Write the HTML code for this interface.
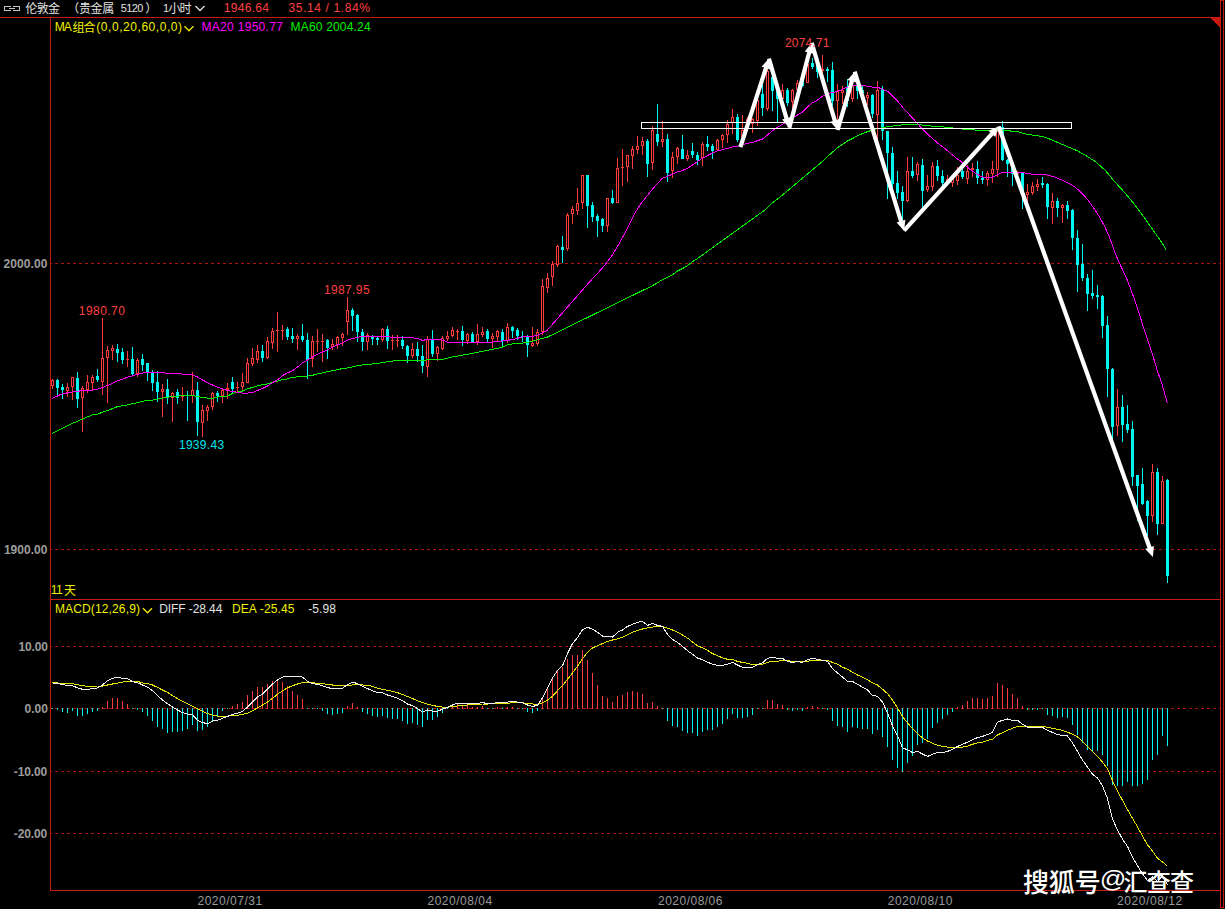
<!DOCTYPE html>
<html lang="zh-CN"><head><meta charset="utf-8"><title>伦敦金 1小时</title>
<style>html,body{margin:0;padding:0;background:#000;width:1225px;height:909px;overflow:hidden}svg{display:block}text{white-space:pre}</style></head>
<body>
<svg width="1225" height="909" viewBox="0 0 1225 909" style="position:absolute;left:0;top:0">
<rect width="1225" height="909" fill="#000"/>
<g shape-rendering="crispEdges">
<line x1="51" x2="1220" y1="263.5" y2="263.5" stroke="#a81410" stroke-width="1" stroke-dasharray="3 3" stroke-dashoffset="2"/>
<line x1="51" x2="1220" y1="549.5" y2="549.5" stroke="#a81410" stroke-width="1" stroke-dasharray="3 3" stroke-dashoffset="2"/>
<line x1="51" x2="1220" y1="646.5" y2="646.5" stroke="#a81410" stroke-width="1" stroke-dasharray="3 3" stroke-dashoffset="2"/>
<line x1="51" x2="1220" y1="708.5" y2="708.5" stroke="#a81410" stroke-width="1" stroke-dasharray="3 3" stroke-dashoffset="2"/>
<line x1="51" x2="1220" y1="771.5" y2="771.5" stroke="#a81410" stroke-width="1" stroke-dasharray="3 3" stroke-dashoffset="2"/>
<line x1="51" x2="1220" y1="833.5" y2="833.5" stroke="#a81410" stroke-width="1" stroke-dasharray="3 3" stroke-dashoffset="2"/>
<path fill="#c8190e" d="M0 17H1220V18H0zM50 18h1V891h-1zM51 599H1220v1H51zM51 890H1220v1H51zM1220 0h4V908h-4zM1221 1v906h2V1z" fill-rule="evenodd"/>
<path fill="#c8190e" d="M1210 18H1220V28z"/>
<path fill="#ff3c3c" fill-rule="evenodd" d="M52 379h1V380h-1zM51 380h3V386h-3zM52 381V385h1V381zM52 386h1V389h-1zM67 383h1V387h-1zM66 387h3V391h-3zM67 388V390h1V388zM67 391h1V397h-1zM71 377h3V387h-3zM72 378V386h1V378zM72 387h1V400h-1zM82 386h1V388h-1zM81 388h3V398h-3zM82 389V397h1V389zM82 398h1V432h-1zM87 375h1V382h-1zM86 382h3V390h-3zM87 383V389h1V383zM87 390h1V393h-1zM92 375h1V377h-1zM91 377h3V383h-3zM92 378V382h1V378zM92 383h1V390h-1zM102 318h1V358h-1zM101 358h3V382h-3zM102 359V381h1V359zM102 382h1V395h-1zM107 346h1V350h-1zM106 350h3V358h-3zM107 351V357h1V351zM107 358h1V403h-1zM112 345h1V348h-1zM111 348h3V351h-3zM112 349V350h1V349zM112 351h1V360h-1zM127 351h1V359h-1zM126 359h3V360h-3zM127 360h1V367h-1zM137 358h1V360h-1zM136 360h3V374h-3zM137 361V373h1V361zM137 374h1V377h-1zM162 384h1V389h-1zM161 389h3V392h-3zM162 390V391h1V390zM162 392h1V417h-1zM172 392h1V393h-1zM171 393h3V398h-3zM172 394V397h1V394zM172 398h1V422h-1zM182 387h1V396h-1zM181 396h3V397h-3zM182 397h1V401h-1zM192 372h1V390h-1zM191 390h3V396h-3zM192 391V395h1V391zM192 396h1V403h-1zM202 405h1V410h-1zM201 410h3V423h-3zM202 411V422h1V411zM202 423h1V437h-1zM207 405h1V407h-1zM206 407h3V411h-3zM207 408V410h1V408zM207 411h1V421h-1zM212 392h1V393h-1zM211 393h3V407h-3zM212 394V406h1V394zM212 407h1V410h-1zM222 388h1V390h-1zM221 390h3V396h-3zM222 391V395h1V391zM222 396h1V403h-1zM227 383h1V388h-1zM226 388h3V390h-3zM227 390h1V399h-1zM237 382h1V387h-1zM236 387h3V388h-3zM237 388h1V392h-1zM242 373h1V382h-1zM241 382h3V387h-3zM242 383V386h1V383zM242 387h1V391h-1zM247 358h1V363h-1zM246 363h3V383h-3zM247 364V382h1V364zM252 348h1V358h-1zM251 358h3V364h-3zM252 359V363h1V359zM252 364h1V366h-1zM257 345h1V351h-1zM256 351h3V360h-3zM257 352V359h1V352zM257 360h1V363h-1zM267 337h1V341h-1zM266 341h3V358h-3zM267 342V357h1V342zM267 358h1V359h-1zM272 328h1V331h-1zM271 331h3V343h-3zM272 332V342h1V332zM272 343h1V349h-1zM277 312h1V330h-1zM276 330h3V331h-3zM277 331h1V352h-1zM282 325h1V330h-1zM281 330h3V331h-3zM282 331h1V340h-1zM297 334h1V336h-1zM296 336h3V339h-3zM297 337V338h1V337zM297 339h1V350h-1zM312 336h1V341h-1zM311 341h3V359h-3zM312 342V358h1V342zM312 359h1V367h-1zM317 329h1V341h-1zM316 341h3V342h-3zM317 342h1V352h-1zM322 334h1V341h-1zM321 341h3V342h-3zM322 342h1V362h-1zM332 339h1V344h-1zM331 344h3V347h-3zM332 345V346h1V345zM332 347h1V350h-1zM337 336h1V337h-1zM336 337h3V345h-3zM337 338V344h1V338zM337 345h1V349h-1zM342 333h1V334h-1zM341 334h3V338h-3zM342 335V337h1V335zM342 338h1V346h-1zM347 297h1V310h-1zM346 310h3V322h-3zM347 311V321h1V311zM347 322h1V335h-1zM367 333h1V335h-1zM366 335h3V342h-3zM367 336V341h1V336zM367 342h1V350h-1zM382 328h1V329h-1zM381 329h3V340h-3zM382 330V339h1V330zM382 340h1V342h-1zM392 335h1V340h-1zM391 340h3V341h-3zM392 341h1V350h-1zM397 335h1V340h-1zM396 340h3V341h-3zM397 341h1V347h-1zM412 343h1V349h-1zM411 349h3V356h-3zM412 350V355h1V350zM412 356h1V358h-1zM427 336h1V339h-1zM426 339h3V367h-3zM427 340V366h1V340zM427 367h1V377h-1zM437 346h1V347h-1zM436 347h3V354h-3zM437 348V353h1V348zM437 354h1V361h-1zM442 336h1V338h-1zM441 338h3V349h-3zM442 339V348h1V339zM442 349h1V350h-1zM447 331h1V336h-1zM446 336h3V339h-3zM447 337V338h1V337zM447 339h1V341h-1zM452 327h1V330h-1zM451 330h3V336h-3zM452 331V335h1V331zM452 336h1V337h-1zM457 329h1V331h-1zM456 331h3V332h-3zM457 332h1V340h-1zM467 333h1V334h-1zM466 334h3V341h-3zM467 335V340h1V335zM467 341h1V344h-1zM477 324h1V334h-1zM476 334h3V342h-3zM477 335V341h1V335zM477 342h1V345h-1zM482 327h1V332h-1zM481 332h3V335h-3zM482 333V334h1V333zM482 335h1V337h-1zM492 333h1V336h-1zM491 336h3V339h-3zM492 337V338h1V337zM492 339h1V348h-1zM497 330h1V331h-1zM496 331h3V337h-3zM497 332V336h1V332zM497 337h1V341h-1zM507 323h1V327h-1zM506 327h3V341h-3zM507 328V340h1V328zM507 341h1V343h-1zM532 327h1V343h-1zM531 343h3V346h-3zM532 344V345h1V344zM532 346h1V347h-1zM537 329h1V332h-1zM536 332h3V344h-3zM537 333V343h1V333zM537 344h1V346h-1zM542 279h1V286h-1zM541 286h3V332h-3zM542 287V331h1V287zM542 332h1V335h-1zM547 273h1V278h-1zM546 278h3V288h-3zM547 279V287h1V279zM547 288h1V293h-1zM552 261h1V264h-1zM551 264h3V277h-3zM552 265V276h1V265zM552 277h1V286h-1zM557 245h1V246h-1zM556 246h3V265h-3zM557 247V264h1V247zM557 265h1V267h-1zM567 213h1V215h-1zM566 215h3V249h-3zM567 216V248h1V216zM567 249h1V251h-1zM572 206h1V209h-1zM571 209h3V214h-3zM572 210V213h1V210zM572 214h1V224h-1zM577 188h1V203h-1zM576 203h3V211h-3zM577 204V210h1V204zM577 211h1V215h-1zM581 175h3V203h-3zM582 176V202h1V176zM582 203h1V209h-1zM606 198h3V226h-3zM607 199V225h1V199zM607 226h1V232h-1zM617 158h1V168h-1zM616 168h3V203h-3zM617 169V202h1V169zM622 149h1V167h-1zM621 167h3V168h-3zM622 168h1V186h-1zM626 155h3V167h-3zM627 156V166h1V156zM627 167h1V182h-1zM632 146h1V149h-1zM631 149h3V156h-3zM632 150V155h1V150zM632 156h1V169h-1zM637 136h1V146h-1zM636 146h3V150h-3zM637 147V149h1V147zM637 150h1V154h-1zM642 137h1V141h-1zM641 141h3V146h-3zM642 142V145h1V142zM642 146h1V155h-1zM652 126h1V130h-1zM651 130h3V163h-3zM652 131V162h1V131zM652 163h1V170h-1zM662 121h1V139h-1zM661 139h3V142h-3zM662 140V141h1V140zM662 142h1V147h-1zM672 152h1V157h-1zM671 157h3V171h-3zM672 158V170h1V158zM672 171h1V178h-1zM677 147h1V148h-1zM676 148h3V157h-3zM677 149V156h1V149zM677 157h1V164h-1zM687 150h1V155h-1zM686 155h3V159h-3zM687 156V158h1V156zM687 159h1V161h-1zM702 142h1V144h-1zM701 144h3V158h-3zM702 145V157h1V145zM702 158h1V166h-1zM717 139h1V140h-1zM716 140h3V150h-3zM717 141V149h1V141zM717 150h1V151h-1zM722 134h1V135h-1zM721 135h3V140h-3zM722 136V139h1V136zM722 140h1V148h-1zM727 120h1V124h-1zM726 124h3V135h-3zM727 125V134h1V125zM727 135h1V143h-1zM732 109h1V117h-1zM731 117h3V123h-3zM732 118V122h1V118zM732 123h1V134h-1zM742 115h1V130h-1zM741 130h3V137h-3zM742 131V136h1V131zM742 137h1V140h-1zM747 117h1V119h-1zM746 119h3V129h-3zM747 120V128h1V120zM747 129h1V131h-1zM752 118h1V119h-1zM751 119h3V124h-3zM752 120V123h1V120zM752 124h1V133h-1zM757 99h1V100h-1zM756 100h3V121h-3zM757 101V120h1V101zM757 121h1V126h-1zM767 69h1V71h-1zM766 71h3V109h-3zM767 72V108h1V72zM767 109h1V111h-1zM782 84h1V90h-1zM781 90h3V99h-3zM782 91V98h1V91zM782 99h1V101h-1zM792 89h1V90h-1zM791 90h3V102h-3zM792 91V101h1V91zM792 102h1V110h-1zM797 80h1V83h-1zM796 83h3V90h-3zM797 84V89h1V84zM797 90h1V93h-1zM807 59h1V64h-1zM806 64h3V83h-3zM807 65V82h1V65zM822 55h1V69h-1zM821 69h3V71h-3zM822 71h1V73h-1zM837 84h1V91h-1zM836 91h3V101h-3zM837 92V100h1V92zM837 101h1V119h-1zM842 86h1V90h-1zM841 90h3V93h-3zM842 91V92h1V91zM842 93h1V104h-1zM852 83h1V85h-1zM851 85h3V99h-3zM852 86V98h1V86zM852 99h1V102h-1zM867 92h1V95h-1zM866 95h3V98h-3zM867 96V97h1V96zM867 98h1V105h-1zM877 81h1V90h-1zM876 90h3V115h-3zM877 91V114h1V91zM877 115h1V140h-1zM907 157h1V171h-1zM906 171h3V201h-3zM907 172V200h1V172zM907 201h1V202h-1zM917 162h1V164h-1zM916 164h3V175h-3zM917 165V174h1V165zM917 175h1V181h-1zM927 175h1V186h-1zM926 186h3V190h-3zM927 187V189h1V187zM927 190h1V192h-1zM932 162h1V166h-1zM931 166h3V187h-3zM932 167V186h1V167zM932 187h1V191h-1zM947 175h1V179h-1zM946 179h3V182h-3zM947 180V181h1V180zM947 182h1V184h-1zM952 177h1V179h-1zM951 179h3V183h-3zM952 180V182h1V180zM952 183h1V187h-1zM957 167h1V175h-1zM956 175h3V181h-3zM957 176V180h1V176zM957 181h1V185h-1zM967 165h1V171h-1zM966 171h3V179h-3zM967 172V178h1V172zM967 179h1V184h-1zM972 163h1V168h-1zM971 168h3V170h-3zM972 170h1V177h-1zM987 171h1V173h-1zM986 173h3V180h-3zM987 174V179h1V174zM987 180h1V186h-1zM992 161h1V169h-1zM991 169h3V174h-3zM992 170V173h1V170zM992 174h1V183h-1zM997 130h1V131h-1zM996 131h3V170h-3zM997 132V169h1V132zM997 170h1V177h-1zM1017 171h1V173h-1zM1016 173h3V174h-3zM1017 174h1V176h-1zM1027 184h1V192h-1zM1026 192h3V195h-3zM1027 193V194h1V193zM1027 195h1V201h-1zM1032 182h1V186h-1zM1031 186h3V193h-3zM1032 187V192h1V187zM1032 193h1V195h-1zM1037 179h1V184h-1zM1036 184h3V187h-3zM1037 185V186h1V185zM1037 187h1V191h-1zM1052 193h1V201h-1zM1051 201h3V208h-3zM1052 202V207h1V202zM1052 208h1V224h-1zM1062 204h1V205h-1zM1061 205h3V208h-3zM1062 206V207h1V206zM1062 208h1V223h-1zM1117 389h1V407h-1zM1116 407h3V426h-3zM1117 408V425h1V408zM1117 426h1V436h-1zM1152 464h1V472h-1zM1151 472h3V516h-3zM1152 473V515h1V473zM1152 516h1V522h-1zM1162 476h1V481h-1zM1161 481h3V524h-3zM1162 482V523h1V482z"/><path fill="#00f6f0" d="M57 379h1V380h-1zM56 380h3V388h-3zM57 388h1V395h-1zM62 384h1V387h-1zM61 387h3V390h-3zM62 390h1V399h-1zM77 372h1V378h-1zM76 378h3V399h-3zM77 399h1V408h-1zM97 369h1V376h-1zM96 376h3V380h-3zM97 380h1V382h-1zM117 344h1V349h-1zM116 349h3V353h-3zM117 353h1V362h-1zM122 348h1V352h-1zM121 352h3V360h-3zM122 360h1V364h-1zM132 347h1V359h-1zM131 359h3V374h-3zM132 374h1V376h-1zM142 354h1V359h-1zM141 359h3V365h-3zM142 365h1V371h-1zM146 363h3V372h-3zM147 372h1V381h-1zM152 370h1V372h-1zM151 372h3V383h-3zM152 383h1V391h-1zM157 371h1V382h-1zM156 382h3V392h-3zM157 392h1V402h-1zM167 379h1V389h-1zM166 389h3V398h-3zM167 398h1V404h-1zM177 389h1V392h-1zM176 392h3V398h-3zM177 398h1V404h-1zM187 391h1V395h-1zM186 395h3V396h-3zM187 396h1V421h-1zM197 382h1V390h-1zM196 390h3V422h-3zM197 422h1V436h-1zM217 391h1V393h-1zM216 393h3V396h-3zM217 396h1V402h-1zM232 377h1V382h-1zM231 382h3V389h-3zM232 389h1V393h-1zM262 345h1V351h-1zM261 351h3V358h-3zM262 358h1V362h-1zM287 327h1V329h-1zM286 329h3V337h-3zM287 337h1V340h-1zM292 328h1V336h-1zM291 336h3V339h-3zM292 339h1V343h-1zM302 324h1V336h-1zM301 336h3V340h-3zM302 340h1V342h-1zM307 333h1V340h-1zM306 340h3V360h-3zM307 360h1V379h-1zM327 339h1V340h-1zM326 340h3V348h-3zM327 348h1V359h-1zM352 308h1V310h-1zM351 310h3V316h-3zM352 316h1V331h-1zM357 314h1V315h-1zM356 315h3V332h-3zM357 332h1V342h-1zM362 329h1V332h-1zM361 332h3V342h-3zM362 342h1V351h-1zM372 335h1V337h-1zM371 337h3V339h-3zM372 339h1V345h-1zM377 336h1V338h-1zM376 338h3V340h-3zM377 340h1V345h-1zM387 326h1V329h-1zM386 329h3V341h-3zM387 341h1V349h-1zM402 336h1V340h-1zM401 340h3V346h-3zM402 346h1V349h-1zM407 345h1V346h-1zM406 346h3V356h-3zM407 356h1V363h-1zM417 342h1V349h-1zM416 349h3V356h-3zM417 356h1V362h-1zM422 345h1V356h-1zM421 356h3V366h-3zM422 366h1V373h-1zM432 330h1V339h-1zM431 339h3V354h-3zM432 354h1V357h-1zM462 326h1V331h-1zM461 331h3V340h-3zM462 340h1V346h-1zM472 332h1V334h-1zM471 334h3V342h-3zM487 329h1V331h-1zM486 331h3V339h-3zM487 339h1V342h-1zM502 329h1V332h-1zM501 332h3V341h-3zM502 341h1V347h-1zM512 326h1V327h-1zM511 327h3V331h-3zM512 331h1V338h-1zM517 328h1V330h-1zM516 330h3V336h-3zM517 336h1V340h-1zM522 331h1V336h-1zM521 336h3V337h-3zM522 337h1V342h-1zM527 335h1V337h-1zM526 337h3V345h-3zM527 345h1V357h-1zM562 236h1V247h-1zM561 247h3V250h-3zM562 250h1V263h-1zM586 175h3V206h-3zM587 206h1V228h-1zM592 202h1V205h-1zM591 205h3V217h-3zM592 217h1V222h-1zM597 214h1V216h-1zM596 216h3V221h-3zM597 221h1V237h-1zM602 218h1V219h-1zM601 219h3V226h-3zM602 226h1V232h-1zM612 190h1V198h-1zM611 198h3V203h-3zM612 203h1V204h-1zM647 139h1V141h-1zM646 141h3V164h-3zM647 164h1V177h-1zM657 104h1V134h-1zM656 134h3V142h-3zM657 142h1V146h-1zM667 134h1V139h-1zM666 139h3V173h-3zM667 173h1V182h-1zM682 135h1V149h-1zM681 149h3V159h-3zM692 143h1V151h-1zM691 151h3V155h-3zM692 155h1V158h-1zM697 152h1V155h-1zM696 155h3V160h-3zM697 160h1V165h-1zM707 136h1V144h-1zM706 144h3V147h-3zM707 147h1V151h-1zM712 144h1V146h-1zM711 146h3V151h-3zM712 151h1V159h-1zM737 114h1V117h-1zM736 117h3V140h-3zM737 140h1V142h-1zM762 85h1V94h-1zM761 94h3V108h-3zM762 108h1V116h-1zM772 64h1V77h-1zM771 77h3V91h-3zM772 91h1V111h-1zM776 87h3V99h-3zM777 99h1V122h-1zM787 88h1V90h-1zM786 90h3V103h-3zM787 103h1V106h-1zM802 77h1V79h-1zM801 79h3V86h-3zM802 86h1V87h-1zM812 58h1V63h-1zM811 63h3V67h-3zM812 67h1V69h-1zM817 59h1V63h-1zM816 63h3V72h-3zM817 72h1V78h-1zM827 67h1V69h-1zM826 69h3V71h-3zM827 71h1V82h-1zM832 62h1V70h-1zM831 70h3V101h-3zM832 101h1V106h-1zM847 79h1V87h-1zM846 87h3V101h-3zM847 101h1V107h-1zM856 86h3V91h-3zM857 91h1V99h-1zM862 86h1V90h-1zM861 90h3V93h-3zM862 93h1V99h-1zM872 94h1V95h-1zM871 95h3V114h-3zM872 114h1V118h-1zM882 86h1V89h-1zM881 89h3V131h-3zM882 131h1V140h-1zM886 131h3V153h-3zM887 153h1V199h-1zM892 147h1V153h-1zM891 153h3V184h-3zM892 184h1V194h-1zM897 171h1V183h-1zM896 183h3V193h-3zM897 193h1V199h-1zM902 186h1V192h-1zM901 192h3V201h-3zM902 201h1V220h-1zM912 157h1V171h-1zM911 171h3V176h-3zM912 176h1V178h-1zM922 159h1V165h-1zM921 165h3V191h-3zM922 191h1V208h-1zM937 160h1V166h-1zM936 166h3V176h-3zM937 176h1V181h-1zM942 170h1V176h-1zM941 176h3V183h-3zM942 183h1V186h-1zM962 165h1V171h-1zM961 171h3V177h-3zM962 177h1V179h-1zM977 161h1V169h-1zM976 169h3V178h-3zM977 178h1V184h-1zM982 171h1V178h-1zM981 178h3V180h-3zM982 180h1V184h-1zM1002 121h1V127h-1zM1001 127h3V160h-3zM1002 160h1V161h-1zM1007 159h1V160h-1zM1006 160h3V164h-3zM1007 164h1V177h-1zM1012 163h1V164h-1zM1011 164h3V174h-3zM1012 174h1V186h-1zM1021 173h3V193h-3zM1022 193h1V209h-1zM1042 177h1V183h-1zM1041 183h3V185h-3zM1042 185h1V188h-1zM1047 183h1V184h-1zM1046 184h3V207h-3zM1047 207h1V219h-1zM1057 198h1V201h-1zM1056 201h3V208h-3zM1057 208h1V217h-1zM1067 201h1V205h-1zM1066 205h3V211h-3zM1067 211h1V219h-1zM1072 209h1V210h-1zM1071 210h3V238h-3zM1072 238h1V250h-1zM1077 230h1V238h-1zM1076 238h3V265h-3zM1077 265h1V292h-1zM1082 244h1V264h-1zM1081 264h3V278h-3zM1082 278h1V281h-1zM1087 274h1V278h-1zM1086 278h3V294h-3zM1087 294h1V311h-1zM1092 270h1V293h-1zM1091 293h3V296h-3zM1092 296h1V299h-1zM1097 285h1V295h-1zM1096 295h3V297h-3zM1097 297h1V309h-1zM1102 295h1V296h-1zM1101 296h3V326h-3zM1102 326h1V338h-1zM1107 316h1V325h-1zM1106 325h3V369h-3zM1107 369h1V397h-1zM1112 368h1V369h-1zM1111 369h3V427h-3zM1112 427h1V439h-1zM1122 395h1V407h-1zM1121 407h3V425h-3zM1122 425h1V442h-1zM1127 405h1V424h-1zM1126 424h3V430h-3zM1127 430h1V433h-1zM1132 421h1V429h-1zM1131 429h3V477h-3zM1132 477h1V486h-1zM1136 475h3V486h-3zM1137 486h1V521h-1zM1142 468h1V484h-1zM1141 484h3V504h-3zM1142 504h1V505h-1zM1147 500h1V501h-1zM1146 501h3V516h-3zM1147 516h1V536h-1zM1157 468h1V472h-1zM1156 472h3V524h-3zM1157 524h1V535h-1zM1167 479h1V480h-1zM1166 480h3V576h-3zM1167 576h1V583h-1z"/>
<path fill="#ff3c3c" d="M102 707h1V709h-1zM107 701h1V709h-1zM112 698h1V709h-1zM117 698h1V709h-1zM122 701h1V709h-1zM127 704h1V709h-1zM232 706h1V709h-1zM237 704h1V709h-1zM242 702h1V709h-1zM247 695h1V709h-1zM252 691h1V709h-1zM257 687h1V709h-1zM262 687h1V709h-1zM267 684h1V709h-1zM272 681h1V709h-1zM277 680h1V709h-1zM282 682h1V709h-1zM287 686h1V709h-1zM292 691h1V709h-1zM297 695h1V709h-1zM302 699h1V709h-1zM347 706h1V709h-1zM352 703h1V709h-1zM357 707h1V709h-1zM452 706h1V709h-1zM457 704h1V709h-1zM462 706h1V709h-1zM467 705h1V709h-1zM472 707h1V709h-1zM477 707h1V709h-1zM482 706h1V709h-1zM497 707h1V709h-1zM507 707h1V709h-1zM512 707h1V709h-1zM542 698h1V709h-1zM547 687h1V709h-1zM552 678h1V709h-1zM557 670h1V709h-1zM562 667h1V709h-1zM567 659h1V709h-1zM572 655h1V709h-1zM577 655h1V709h-1zM582 650h1V709h-1zM587 660h1V709h-1zM592 673h1V709h-1zM597 685h1V709h-1zM602 696h1V709h-1zM607 698h1V709h-1zM612 702h1V709h-1zM617 696h1V709h-1zM622 695h1V709h-1zM627 692h1V709h-1zM632 691h1V709h-1zM637 692h1V709h-1zM642 694h1V709h-1zM647 703h1V709h-1zM652 702h1V709h-1zM657 706h1V709h-1zM767 700h1V709h-1zM772 700h1V709h-1zM777 704h1V709h-1zM782 705h1V709h-1zM807 707h1V709h-1zM812 706h1V709h-1zM817 707h1V709h-1zM957 707h1V709h-1zM962 705h1V709h-1zM967 701h1V709h-1zM972 698h1V709h-1zM977 698h1V709h-1zM982 699h1V709h-1zM987 698h1V709h-1zM992 696h1V709h-1zM997 683h1V709h-1zM1002 685h1V709h-1zM1007 688h1V709h-1zM1012 694h1V709h-1zM1017 698h1V709h-1zM1022 706h1V709h-1z"/><path fill="#00f6f0" d="M52 708h1V709h-1zM57 708h1V710h-1zM62 708h1V712h-1zM67 708h1V713h-1zM72 708h1V711h-1zM77 708h1V716h-1zM82 708h1V716h-1zM87 708h1V714h-1zM92 708h1V712h-1zM97 708h1V711h-1zM132 708h1V709h-1zM137 708h1V710h-1zM142 708h1V712h-1zM147 708h1V716h-1zM152 708h1V721h-1zM157 708h1V727h-1zM162 708h1V729h-1zM167 708h1V733h-1zM172 708h1V732h-1zM177 708h1V732h-1zM182 708h1V731h-1zM187 708h1V729h-1zM192 708h1V725h-1zM197 708h1V731h-1zM202 708h1V730h-1zM207 708h1V727h-1zM212 708h1V721h-1zM217 708h1V716h-1zM222 708h1V711h-1zM227 708h1V709h-1zM307 708h1V709h-1zM312 708h1V709h-1zM317 708h1V709h-1zM322 708h1V711h-1zM327 708h1V714h-1zM332 708h1V715h-1zM337 708h1V714h-1zM342 708h1V713h-1zM362 708h1V712h-1zM367 708h1V714h-1zM372 708h1V716h-1zM377 708h1V717h-1zM382 708h1V716h-1zM387 708h1V718h-1zM392 708h1V719h-1zM397 708h1V719h-1zM402 708h1V721h-1zM407 708h1V724h-1zM412 708h1V723h-1zM417 708h1V725h-1zM422 708h1V727h-1zM427 708h1V720h-1zM432 708h1V720h-1zM437 708h1V717h-1zM442 708h1V713h-1zM447 708h1V709h-1zM487 708h1V709h-1zM492 708h1V709h-1zM502 708h1V709h-1zM517 708h1V709h-1zM522 708h1V709h-1zM527 708h1V712h-1zM532 708h1V713h-1zM537 708h1V711h-1zM662 708h1V709h-1zM667 708h1V721h-1zM672 708h1V726h-1zM677 708h1V727h-1zM682 708h1V731h-1zM687 708h1V733h-1zM692 708h1V733h-1zM697 708h1V736h-1zM702 708h1V732h-1zM707 708h1V730h-1zM712 708h1V730h-1zM717 708h1V727h-1zM722 708h1V724h-1zM727 708h1V719h-1zM732 708h1V714h-1zM737 708h1V718h-1zM742 708h1V718h-1zM747 708h1V717h-1zM752 708h1V715h-1zM757 708h1V709h-1zM762 708h1V709h-1zM787 708h1V710h-1zM792 708h1V711h-1zM797 708h1V710h-1zM802 708h1V711h-1zM822 708h1V709h-1zM827 708h1V710h-1zM832 708h1V721h-1zM837 708h1V726h-1zM842 708h1V727h-1zM847 708h1V732h-1zM852 708h1V727h-1zM857 708h1V728h-1zM862 708h1V729h-1zM867 708h1V729h-1zM872 708h1V734h-1zM877 708h1V730h-1zM882 708h1V737h-1zM887 708h1V747h-1zM892 708h1V760h-1zM897 708h1V768h-1zM902 708h1V772h-1zM907 708h1V763h-1zM912 708h1V756h-1zM917 708h1V745h-1zM922 708h1V743h-1zM927 708h1V739h-1zM932 708h1V728h-1zM937 708h1V723h-1zM942 708h1V719h-1zM947 708h1V715h-1zM952 708h1V712h-1zM1027 708h1V710h-1zM1032 708h1V710h-1zM1037 708h1V710h-1zM1042 708h1V709h-1zM1047 708h1V715h-1zM1052 708h1V716h-1zM1057 708h1V718h-1zM1062 708h1V717h-1zM1067 708h1V718h-1zM1072 708h1V725h-1zM1077 708h1V735h-1zM1082 708h1V743h-1zM1087 708h1V750h-1zM1092 708h1V752h-1zM1097 708h1V751h-1zM1102 708h1V755h-1zM1107 708h1V766h-1zM1112 708h1V785h-1zM1117 708h1V786h-1zM1122 708h1V786h-1zM1127 708h1V782h-1zM1132 708h1V786h-1zM1137 708h1V786h-1zM1142 708h1V784h-1zM1147 708h1V780h-1zM1152 708h1V760h-1zM1157 708h1V755h-1zM1162 708h1V736h-1zM1167 708h1V746h-1z"/>
<polyline fill="none" stroke="#00f000" stroke-width="1" points="52.4,433.4 62.4,428.4 72.4,423.4 82.4,419.1 92.4,414.9 97.4,414.1 107.4,410.6 117.4,406.7 127.4,404.9 137.4,402.7 142.4,401.3 147.4,400.3 152.4,400.1 157.4,399.1 162.4,398.1 167.4,397.3 172.4,396.3 177.4,396.3 182.4,395.3 192.4,395.3 197.4,396.6 202.4,397.3 207.4,398.1 212.4,398.3 217.4,397.1 222.4,396.4 227.4,396.0 232.4,393.6 237.4,392.1 242.4,391.1 247.4,389.0 252.4,387.4 257.4,386.0 262.4,384.6 267.4,384.0 272.4,382.1 277.4,381.1 282.4,379.7 287.4,378.9 292.4,377.4 297.4,376.9 302.4,376.1 307.4,376.1 312.4,375.3 317.4,374.0 322.4,372.9 327.4,371.7 332.4,370.7 337.4,369.7 342.4,368.6 347.4,367.9 352.4,366.9 357.4,365.7 362.4,365.0 367.4,364.7 372.4,364.0 378.7,363.2 385.0,362.1 395.0,360.7 407.4,360.3 422.4,360.3 430.0,359.7 437.4,359.7 445.0,358.9 450.0,357.4 457.4,356.1 467.4,354.3 477.4,352.4 487.4,350.3 497.4,348.3 502.4,347.1 507.4,345.0 512.4,344.0 517.4,343.1 522.4,343.1 527.4,342.4 532.4,341.1 537.4,340.0 542.4,338.3 547.4,337.1 652.4,285.7 657.4,282.9 662.4,279.7 667.4,277.4 672.4,275.0 677.4,271.1 682.4,268.6 687.4,265.7 692.4,261.7 697.4,258.6 702.4,255.0 707.4,251.4 765.0,209.9 772.4,202.9 779.9,197.1 824.3,159.9 830.0,154.3 837.4,147.9 842.4,144.3 847.4,141.1 852.4,138.6 857.4,135.7 862.4,133.6 867.4,131.7 872.4,130.0 877.4,128.6 882.4,127.7 888.7,126.6 892.4,126.1 898.7,125.4 902.4,124.7 909.9,124.4 917.1,124.3 925.0,125.4 935.0,126.4 945.0,127.1 955.0,128.3 965.0,129.3 975.0,130.0 985.0,130.4 995.0,130.4 1007.4,130.7 1017.4,131.7 1027.4,134.3 1037.4,135.7 1044.9,137.1 1077.1,150.7 1085.0,155.0 1095.0,161.4 1105.0,170.0 1115.0,182.1 1125.0,192.9 1135.0,205.0 1145.0,218.6 1155.0,232.9 1162.1,242.9 1166.4,250.4" />
<polyline fill="none" stroke="#ff00ff" stroke-width="1" points="52.4,398.4 62.4,393.7 72.4,392.0 82.4,390.6 92.4,390.1 97.4,389.4 107.4,385.6 117.4,381.0 127.4,377.3 137.4,374.4 142.4,373.1 147.4,372.4 152.4,372.4 162.4,372.4 167.4,373.4 177.4,373.4 182.4,374.1 192.4,374.6 197.4,377.0 202.4,379.9 207.4,382.7 212.4,385.0 217.4,387.1 222.4,388.9 227.4,390.4 232.4,391.7 237.4,392.1 242.4,393.1 247.4,393.1 252.4,392.6 257.4,390.4 262.4,388.6 267.4,386.0 272.4,382.6 277.4,380.0 282.4,375.7 287.4,372.9 292.4,370.7 297.4,367.1 302.4,362.9 307.4,360.0 312.4,357.1 317.4,354.3 322.4,352.1 327.4,349.7 332.4,347.1 337.4,345.0 342.4,342.9 347.4,340.3 352.4,338.6 357.4,337.4 362.4,336.4 367.4,336.4 372.4,336.4 377.4,336.5 382.4,336.7 392.4,337.1 402.4,337.1 410.0,337.4 417.4,338.6 422.4,340.3 427.4,339.6 432.4,339.6 442.4,340.0 447.4,342.1 457.4,342.1 472.4,342.1 487.4,342.1 492.4,342.1 497.4,341.1 502.4,341.0 507.4,340.3 512.4,339.6 517.4,338.3 522.4,336.9 527.4,336.9 532.4,336.4 537.4,335.4 542.4,332.9 547.4,330.0 590.0,281.4 597.4,273.6 605.0,265.0 612.4,255.0 620.0,242.1 625.0,232.9 630.0,222.9 635.0,212.9 641.2,203.2 646.2,197.0 652.4,189.4 657.4,183.4 662.4,178.3 667.4,176.4 672.4,174.1 677.4,172.0 682.4,170.5 687.4,168.4 692.4,165.1 697.4,161.6 702.4,158.3 707.4,155.7 712.4,152.9 717.4,151.0 722.4,149.6 727.4,148.6 732.4,146.9 737.4,146.1 742.4,145.0 747.4,143.3 752.4,142.6 757.4,140.7 762.4,139.1 767.4,135.0 772.4,130.7 777.4,127.5 782.4,124.3 787.4,121.4 792.4,117.9 797.4,115.0 802.4,112.1 807.4,107.1 812.4,102.9 817.4,100.0 822.4,96.4 827.4,93.6 832.4,92.6 837.4,91.4 842.4,89.3 847.4,87.1 852.4,85.0 857.4,85.0 862.4,85.0 867.4,86.4 872.4,87.1 877.4,87.1 882.4,89.3 887.4,91.1 892.4,95.7 897.4,100.7 903.7,108.6 908.7,113.9 915.0,120.7 920.0,126.4 925.0,131.4 930.0,136.4 935.0,140.7 940.0,145.0 945.0,148.6 950.0,152.9 955.0,157.1 960.0,160.7 965.0,165.0 970.0,169.3 975.0,172.9 980.0,176.0 986.2,178.2 992.4,177.1 997.4,175.0 1002.4,172.4 1007.4,172.4 1012.4,172.4 1017.4,172.4 1022.4,172.4 1027.4,173.6 1033.7,174.4 1037.4,174.3 1044.9,174.6 1050.0,175.7 1055.0,177.1 1060.0,179.3 1065.0,181.4 1070.0,183.9 1075.0,187.1 1080.0,191.4 1085.0,196.4 1090.0,202.9 1095.0,210.0 1100.0,217.9 1105.0,227.1 1110.0,238.6 1115.0,252.9 1120.0,264.3 1126.1,277.1 1132.1,292.9 1137.1,307.1 1142.1,322.9 1147.1,338.6 1152.1,352.9 1157.1,370.0 1162.1,384.3 1167.4,403.4" />
<polyline fill="none" stroke="#e6e600" stroke-width="1" points="52.5,682.6 57.5,682.9 62.5,683.6 67.5,683.6 72.5,683.6 77.5,684.7 82.5,685.7 87.5,686.4 92.5,686.4 97.5,687.1 102.5,686.0 107.5,685.0 112.5,684.0 117.5,683.1 122.5,682.1 127.5,681.1 132.5,681.1 137.5,681.4 142.5,682.9 147.5,683.6 152.5,685.0 157.5,687.4 162.5,690.0 167.5,692.4 172.5,695.7 177.5,698.6 182.5,701.4 187.5,703.9 192.5,706.1 197.5,708.6 202.5,711.4 207.5,713.6 212.5,715.3 217.5,716.1 222.5,716.4 227.5,716.1 232.5,715.7 237.5,715.3 242.5,714.3 247.5,713.3 252.5,710.7 257.5,707.9 262.5,705.0 267.5,702.1 272.5,698.3 277.5,694.3 282.5,690.7 287.5,687.9 292.5,685.7 297.5,684.0 302.5,682.4 307.5,682.1 312.5,682.6 317.5,683.3 322.5,683.6 327.5,684.3 332.5,685.0 337.5,685.0 342.5,685.7 347.5,685.4 352.5,685.0 357.5,684.3 362.5,685.0 367.5,685.4 372.5,686.4 377.5,688.3 382.5,689.3 387.5,690.4 392.5,691.4 397.5,692.6 402.5,694.6 407.5,696.4 412.5,698.6 417.5,700.7 422.5,702.6 427.5,704.3 432.5,705.4 437.5,706.4 442.5,707.1 447.5,707.1 452.5,706.7 457.5,706.0 462.5,705.4 467.5,705.0 472.5,704.3 477.5,704.3 482.5,704.0 487.5,704.0 492.5,703.6 497.5,703.3 502.5,703.3 507.5,703.1 512.5,702.9 517.5,702.9 522.5,702.9 527.5,703.3 532.5,704.0 537.5,704.3 542.5,702.9 547.5,700.0 552.5,696.4 557.5,690.7 562.5,685.7 567.5,679.3 572.5,672.9 577.5,666.4 582.5,658.6 587.5,652.4 592.5,647.9 597.5,645.7 602.5,643.6 607.5,641.4 612.5,640.0 617.5,639.0 622.5,637.1 627.5,634.7 632.5,632.1 637.5,630.4 642.5,629.0 647.5,627.9 652.5,627.1 657.5,626.1 662.5,626.4 667.5,628.1 672.5,630.0 677.5,632.1 682.5,635.0 687.5,638.1 692.5,641.9 697.5,645.7 702.5,647.9 707.5,650.4 712.5,653.6 717.5,655.7 722.5,657.9 727.5,659.3 732.5,659.3 737.5,661.4 742.5,662.4 747.5,663.3 752.5,664.6 757.5,664.6 762.5,664.3 767.5,662.4 772.5,661.4 777.5,661.4 782.5,660.3 787.5,660.7 792.5,661.4 797.5,661.4 802.5,661.4 807.5,661.4 812.5,660.4 817.5,660.4 822.5,660.4 827.5,660.4 832.5,662.4 837.5,664.3 842.5,667.1 847.5,669.3 852.5,672.1 857.5,675.0 862.5,677.1 867.5,679.7 872.5,682.9 877.5,685.0 882.5,689.3 887.5,693.6 892.5,700.0 897.5,707.9 902.5,716.4 907.5,722.9 912.5,728.6 917.5,733.6 922.5,737.9 927.5,741.0 932.5,743.3 937.5,745.3 942.5,746.4 947.5,747.1 952.5,747.4 957.5,747.4 962.5,747.1 967.5,746.1 972.5,744.3 977.5,742.9 982.5,742.1 987.5,740.4 992.5,739.3 997.5,735.0 1002.5,732.6 1007.5,730.3 1012.5,728.3 1017.5,726.4 1022.5,726.4 1027.5,726.4 1032.5,726.4 1037.5,726.4 1042.5,726.4 1047.5,727.4 1052.5,728.3 1057.5,729.3 1062.5,730.4 1067.5,732.1 1072.5,734.3 1077.5,736.9 1082.5,741.4 1087.5,746.4 1092.5,751.4 1097.5,756.4 1102.5,762.1 1107.5,768.6 1112.5,780.6 1117.5,791.1 1122.5,800.4 1127.5,809.7 1132.5,818.3 1137.5,826.9 1142.5,836.1 1147.5,844.7 1152.5,851.1 1157.5,858.3 1162.5,861.9 1167.5,866.4" />
<polyline fill="none" stroke="#f0f0f0" stroke-width="1" points="52.5,682.9 57.5,683.6 62.5,684.6 67.5,685.4 72.5,685.7 77.5,687.9 82.5,689.3 87.5,689.3 92.5,688.6 97.5,687.9 102.5,685.0 107.5,680.7 112.5,678.3 117.5,677.1 122.5,678.3 127.5,678.6 132.5,681.7 137.5,682.6 142.5,685.0 147.5,687.1 152.5,690.7 157.5,695.7 162.5,700.0 167.5,703.6 172.5,707.1 177.5,710.0 182.5,712.6 187.5,714.3 192.5,714.6 197.5,720.3 202.5,722.6 207.5,723.6 212.5,721.1 217.5,720.3 222.5,718.3 227.5,716.4 232.5,714.3 237.5,713.1 242.5,711.4 247.5,707.1 252.5,702.1 257.5,696.9 262.5,694.0 267.5,688.9 272.5,684.0 277.5,680.0 282.5,677.1 287.5,676.1 292.5,676.1 297.5,676.1 302.5,677.1 307.5,681.4 312.5,683.6 317.5,684.3 322.5,685.7 327.5,687.6 332.5,688.6 337.5,688.6 342.5,688.3 347.5,684.6 352.5,682.1 357.5,683.6 362.5,686.4 367.5,688.6 372.5,690.7 377.5,692.4 382.5,692.9 387.5,695.0 392.5,696.4 397.5,698.3 402.5,700.7 407.5,704.0 412.5,705.7 417.5,708.6 422.5,712.1 427.5,710.0 432.5,711.1 437.5,711.1 442.5,709.3 447.5,707.1 452.5,705.0 457.5,703.1 462.5,703.1 467.5,703.6 472.5,703.6 477.5,703.6 482.5,702.6 487.5,703.6 492.5,703.6 497.5,702.6 502.5,702.9 507.5,702.1 512.5,701.1 517.5,702.1 522.5,702.9 527.5,705.0 532.5,706.4 537.5,705.4 542.5,697.9 547.5,687.9 552.5,678.1 557.5,670.4 562.5,665.7 567.5,653.6 572.5,643.6 577.5,637.6 582.5,629.6 587.5,627.1 592.5,629.3 597.5,632.1 602.5,636.1 607.5,636.1 612.5,637.1 617.5,632.4 622.5,630.0 627.5,626.4 632.5,624.3 637.5,622.4 642.5,621.4 647.5,625.4 652.5,623.3 657.5,625.4 662.5,626.4 667.5,634.3 672.5,639.3 677.5,642.4 682.5,646.4 687.5,650.7 692.5,654.3 697.5,658.1 702.5,659.6 707.5,662.1 712.5,664.3 717.5,665.4 722.5,665.4 727.5,664.3 732.5,662.4 737.5,665.0 742.5,667.4 747.5,667.4 752.5,667.4 757.5,664.6 762.5,662.9 767.5,658.3 772.5,657.4 777.5,658.3 782.5,658.3 787.5,661.4 792.5,662.4 797.5,661.7 802.5,662.4 807.5,659.7 812.5,658.3 817.5,659.3 822.5,660.3 827.5,661.4 832.5,668.6 837.5,672.9 842.5,677.1 847.5,681.4 852.5,681.4 857.5,684.3 862.5,687.1 867.5,690.0 872.5,695.4 877.5,696.4 882.5,702.1 887.5,712.9 892.5,725.7 897.5,735.7 902.5,747.9 907.5,749.7 912.5,752.6 917.5,751.4 922.5,754.0 927.5,756.4 932.5,754.3 937.5,752.6 942.5,752.6 947.5,751.4 952.5,749.3 957.5,746.4 962.5,744.3 967.5,742.1 972.5,739.7 977.5,737.6 982.5,736.4 987.5,734.6 992.5,732.1 997.5,722.1 1002.5,720.3 1007.5,719.0 1012.5,720.3 1017.5,720.3 1022.5,724.3 1027.5,727.1 1032.5,727.1 1037.5,727.1 1042.5,727.4 1047.5,730.4 1052.5,732.4 1057.5,734.6 1062.5,735.4 1067.5,736.0 1072.5,742.9 1077.5,751.4 1082.5,760.0 1087.5,767.1 1092.5,774.3 1097.5,777.9 1102.5,785.7 1107.5,798.6 1112.5,818.9 1117.5,829.9 1122.5,839.2 1127.5,846.5 1132.5,857.1 1137.5,865.7 1142.5,873.9 1147.5,880.5 1152.5,876.9 1157.5,881.6 1162.5,875.7 1167.5,885.2" />
</g>
<rect x="641.5" y="122.5" width="430" height="6" fill="none" stroke="#fff" stroke-width="1" shape-rendering="crispEdges"/>
<line x1="740.4" y1="147.1" x2="766.8" y2="65.3" stroke="#fff" stroke-width="4.2" stroke-linecap="butt"/><polygon fill="#fff" points="768.9,58.6 770.2,69.5 761.5,66.7"/>
<line x1="768.9" y1="58.6" x2="787.3" y2="121.2" stroke="#fff" stroke-width="4.2" stroke-linecap="butt"/><polygon fill="#fff" points="789.3,127.9 782.1,119.6 790.9,117.0"/>
<line x1="789.3" y1="127.9" x2="809.9" y2="49.7" stroke="#fff" stroke-width="4.2" stroke-linecap="butt"/><polygon fill="#fff" points="811.7,42.9 813.6,53.7 804.7,51.4"/>
<line x1="811.7" y1="42.9" x2="835.6" y2="123.3" stroke="#fff" stroke-width="4.2" stroke-linecap="butt"/><polygon fill="#fff" points="837.6,130.0 830.3,121.7 839.2,119.1"/>
<line x1="837.6" y1="130.0" x2="852.7" y2="78.4" stroke="#fff" stroke-width="4.2" stroke-linecap="butt"/><polygon fill="#fff" points="854.7,71.7 856.3,82.6 847.5,80.0"/>
<line x1="854.7" y1="71.7" x2="901.9" y2="224.0" stroke="#fff" stroke-width="4.2" stroke-linecap="butt"/><polygon fill="#fff" points="904.0,230.7 896.6,222.5 905.4,219.8"/>
<line x1="904.0" y1="230.7" x2="993.9" y2="131.6" stroke="#fff" stroke-width="4.2" stroke-linecap="butt"/><polygon fill="#fff" points="998.6,126.4 995.3,136.9 988.5,130.7"/>
<line x1="998.6" y1="126.4" x2="1150.5" y2="550.3" stroke="#fff" stroke-width="4.2" stroke-linecap="butt"/><polygon fill="#fff" points="1152.9,556.9 1145.2,549.0 1153.9,545.9"/>
<g font-family="Liberation Sans, Noto Sans CJK SC, sans-serif" font-size="12"><text x="25.4" y="13" fill="#e2e2e2" letter-spacing="-0.65">伦敦金</text><text x="67.2" y="13" fill="#e2e2e2" letter-spacing="-0.3">（贵金属</text><text x="120.7" y="12" fill="#e2e2e2" font-size="11" letter-spacing="-0.567">5120</text><text x="145.3" y="13" fill="#e2e2e2">）</text><text x="162.9" y="12" fill="#e2e2e2" font-size="11">1</text><text x="168.6" y="13" fill="#e2e2e2" letter-spacing="-1.0">小时</text><text x="223.8" y="12" fill="#ff4040" letter-spacing="0.3">1946.64</text><text x="288.6" y="12" fill="#ff4040" letter-spacing="0.6">35.14 / 1.84%</text><text x="54.8" y="31" fill="#f0f000" letter-spacing="-1.0">MA</text><text x="72.4" y="32" fill="#f0f000" letter-spacing="-1.0">组合</text><text x="96.3" y="31" fill="#f0f000" letter-spacing="0.55">(0,0,20,60,0,0)</text><text x="201.5" y="31" fill="#ff00ff" letter-spacing="0.3">MA20 1950.77</text><text x="290.5" y="31" fill="#00f000" letter-spacing="0.191">MA60 2004.24</text><text x="78.8" y="315" fill="#ff4040" letter-spacing="0.449">1980.70</text><text x="323.9" y="294" fill="#ff4040" letter-spacing="0.384">1987.95</text><text x="785.0" y="47" fill="#ff4040" letter-spacing="0.167">2074.71</text><text x="178.9" y="449" fill="#00e6f0" letter-spacing="0.316">1939.43</text><text x="50.8" y="594" fill="#f0f000" letter-spacing="-0.6">11</text><text x="63.9" y="595" fill="#f0f000">天</text><text x="54.9" y="613" fill="#f0f000" letter-spacing="0.142">MACD(12,26,9)</text><text x="159.2" y="613" fill="#e2e2e2" letter-spacing="-0.09">DIFF -28.44</text><text x="231.9" y="613" fill="#f0f000" letter-spacing="0.133">DEA -25.45</text><text x="308.2" y="613" fill="#e2e2e2" letter-spacing="0.125">-5.98</text><text x="3.4" y="268" fill="#9c9c9c" font-weight="700" letter-spacing="0.1">2000.00</text><text x="3.9" y="554" fill="#9c9c9c" font-weight="700" letter-spacing="0.017">1900.00</text><text x="18.4" y="651" fill="#9c9c9c" font-weight="700" letter-spacing="-0.1">10.00</text><text x="24.6" y="713" fill="#9c9c9c" font-weight="700">0.00</text><text x="13.8" y="776" fill="#9c9c9c" font-weight="700" letter-spacing="-0.12">-10.00</text><text x="13.8" y="838" fill="#9c9c9c" font-weight="700" letter-spacing="-0.12">-20.00</text><text x="197.5" y="905" fill="#9c9c9c" letter-spacing="0.5">2020/07/31</text><text x="427.5" y="905" fill="#9c9c9c" letter-spacing="0.5">2020/08/04</text><text x="658.0" y="905" fill="#9c9c9c" letter-spacing="0.489">2020/08/06</text><text x="887.7" y="905" fill="#9c9c9c" letter-spacing="0.522">2020/08/10</text><text x="1117.1" y="905" fill="#9c9c9c" letter-spacing="0.556">2020/08/12</text><text x="1023.0" y="891.5" fill="#ffffff" font-size="26" font-weight="500" letter-spacing="-0.15">搜狐号</text><text x="1123.6" y="891" fill="#ffffff" font-size="24" font-weight="500" letter-spacing="-0.85">汇查查</text></g>
<polyline fill="none" stroke="#e2e2e2" stroke-width="1.3" points="195.5,6 200.0,10.5 204.5,6"/>
<polyline fill="none" stroke="#f0f000" stroke-width="1.3" points="184.5,26.3 189.0,30.8 193.5,26.3"/>
<polyline fill="none" stroke="#f0f000" stroke-width="1.3" points="143,608.3 147.5,612.8 152,608.3"/>
<path fill="#c4c4c4" shape-rendering="crispEdges" d="M4 6h7v1h-6v3h6v1h-7zM13 6h7v5h-7v-1h6v-3h-6zM9 8h6v1h-6z"/>
<text transform="translate(1099.8,886.6) scale(1.14,1)" fill="#fff" font-family="Liberation Sans, sans-serif" font-size="23" font-weight="500">@</text>
</svg>
</body></html>
